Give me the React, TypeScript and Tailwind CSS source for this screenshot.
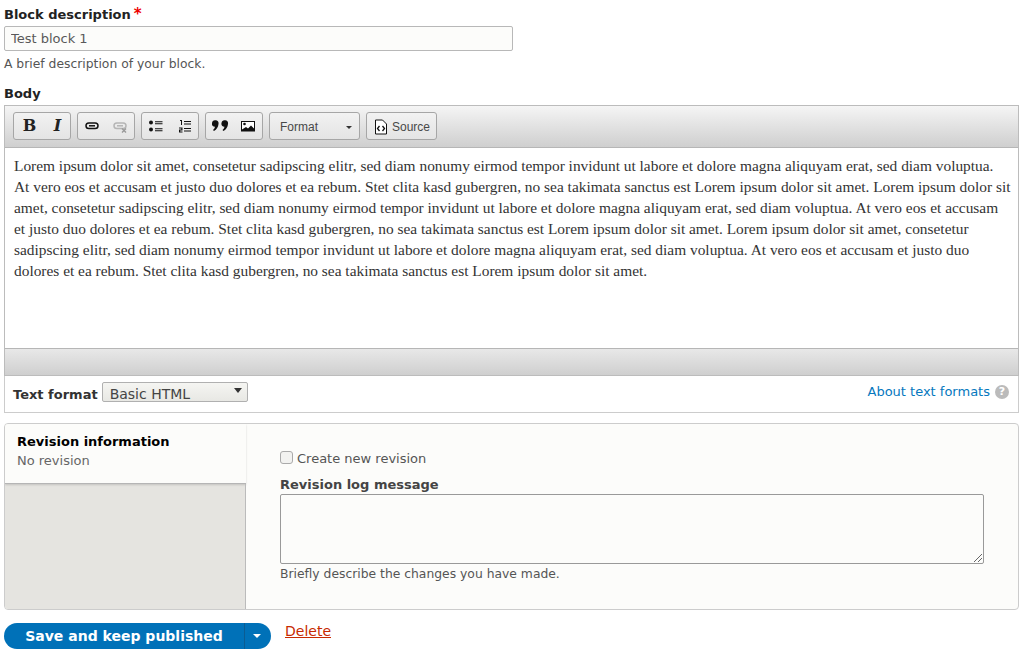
const ui = "font-['DejaVu_Sans',sans-serif]";

function Group({ children, w }: { children: React.ReactNode; w: string }) {
  return (
    <div className={`flex h-[28px] items-center justify-around rounded-[3px] border border-[#a6a6a6] bg-gradient-to-b from-[#f2f2f2] to-[#e4e4e4] ${w}`}>
      {children}
    </div>
  );
}

function LinkIcon({ off }: { off?: boolean }) {
  const c = off ? '#b5b5b5' : '#111';
  return (
    <svg width="16" height="16" viewBox="0 0 16 16" fill="none">
      <rect x="2" y="5" width="12" height="5.6" rx="2.8" stroke={c} strokeWidth="1.5" />
      <path d="M5 7.8h6" stroke={c} strokeWidth="1.5" />
      {off && <path d="M10 10.5l4 4m0-4l-4 4" stroke="#999" strokeWidth="1.4" />}
    </svg>
  );
}

const lines = [
  'Lorem ipsum dolor sit amet, consetetur sadipscing elitr, sed diam nonumy eirmod tempor invidunt ut labore et dolore magna aliquyam erat, sed diam voluptua.',
  'At vero eos et accusam et justo duo dolores et ea rebum. Stet clita kasd gubergren, no sea takimata sanctus est Lorem ipsum dolor sit amet. Lorem ipsum dolor sit',
  'amet, consetetur sadipscing elitr, sed diam nonumy eirmod tempor invidunt ut labore et dolore magna aliquyam erat, sed diam voluptua. At vero eos et accusam',
  'et justo duo dolores et ea rebum. Stet clita kasd gubergren, no sea takimata sanctus est Lorem ipsum dolor sit amet. Lorem ipsum dolor sit amet, consetetur',
  'sadipscing elitr, sed diam nonumy eirmod tempor invidunt ut labore et dolore magna aliquyam erat, sed diam voluptua. At vero eos et accusam et justo duo',
  'dolores et ea rebum. Stet clita kasd gubergren, no sea takimata sanctus est Lorem ipsum dolor sit amet.',
];

export default function App() {
  return (
    <div className={`${ui} h-[654px] w-[1026px] overflow-hidden bg-white px-1 text-[13px] text-[#333]`}>
      <div className="flex h-[26px] items-end pb-[2px]">
        <label className="font-bold text-[#222]">Block description</label>
        <span className="relative top-[-2px] ml-[3px] text-[15px] leading-none font-bold text-[#e00]">*</span>
      </div>
      <input
        readOnly
        value="Test block 1"
        className="block h-[25px] w-[509px] rounded-[2px] border border-[#b8b8b8] bg-[#fcfcfa] px-[6px] text-[13px] text-[#595959] outline-none"
      />
      <p className="mt-[4px] text-[12.35px] leading-[18px] text-[#555]">A brief description of your block.</p>
      <label className="mt-[11px] block leading-[20px] font-bold text-[#222]">Body</label>

      <div className="mt-[1px] w-[1015px] border border-[#bcbcbc]">
        <div className="flex h-[42px] gap-[6px] border-b border-[#b6b6b6] bg-gradient-to-b from-[#f5f5f5] to-[#cfcfcf] pt-[6px] pl-[8px]">
          <Group w="w-[58px]">
            <span className="font-['DejaVu_Serif',serif] text-[16px] font-bold text-[#222]">B</span>
            <span className="font-['DejaVu_Serif',serif] text-[16px] font-bold text-[#222] italic">I</span>
          </Group>
          <Group w="w-[58px]">
            <LinkIcon />
            <LinkIcon off />
          </Group>
          <Group w="w-[58px]">
            <svg width="16" height="16" viewBox="0 0 16 16" fill="#111">
              <circle cx="3" cy="4.5" r="2" />
              <circle cx="3" cy="11.5" r="2" />
              <path d="M7 3.2h7.5v1H7zM7 5.2h7.5v1H7zM7 10.2h7.5v1H7zM7 12.2h7.5v1H7z" />
            </svg>
            <svg width="16" height="16" viewBox="0 0 16 16" fill="#111">
              <path d="M8 3h7v1H8zM8 5.5h7v1H8zM8 10h7v1H8zM8 12.5h7v1H8z" />
              <path d="M4 2h2v5H5V3H4zM3 9.5h3.5v3H4.2v1h2.3v1H3v-3h2.3v-1H3z" />
            </svg>
          </Group>
          <Group w="w-[58px]">
            <svg width="17" height="16" viewBox="0 0 17 16" fill="#111">
              <path d="M0 5a3 3 0 1 1 6.5 1c-.3 3-1.8 5.5-4.5 7l-1-1c1.200-1 1.800-2 2-3.200A3 3 0 0 1 0 5zM9.500 5a3 3 0 1 1 6.500 1c-.3 3-1.800 5.500-4.500 7l-1-1c1.200-1 1.800-2 2-3.200A3 3 0 0 1 9.500 5z" />
            </svg>
            <svg width="16" height="16" viewBox="0 0 16 16">
              <path d="M1 3h14v10.500H1z" fill="#111" />
              <path d="M2 4h12v6.500l-3-3-3 3-2-1.500-4 2.500z" fill="#fff" />
              <circle cx="4.500" cy="6" r="1.300" fill="#111" />
            </svg>
          </Group>
          <div className="flex h-[28px] w-[91px] items-center justify-between rounded-[3px] border border-[#a6a6a6] bg-gradient-to-b from-[#f2f2f2] to-[#e4e4e4] pt-[1px] pr-[7px] pl-[10px] font-['Liberation_Sans',sans-serif] text-[12px] text-[#484848]">
            Format
            <span className="mt-[1px] border-x-[3px] border-t-[3px] border-x-transparent border-t-[#333]" />
          </div>
          <div className="flex h-[28px] w-[71px] items-center gap-[5px] rounded-[3px] border border-[#a6a6a6] bg-gradient-to-b from-[#f2f2f2] to-[#e4e4e4] pt-[1px] pl-[8px] font-['Liberation_Sans',sans-serif] text-[12px] text-[#484848]">
            <svg width="12" height="16" viewBox="0 0 12 16" fill="none">
              <path d="M.5 1h7l4 4v10H.5z" fill="#fff" stroke="#111" />
              <path d="M4.500 7L2.500 9.500 4.500 12M7.500 7l2 2.500-2 2.500" stroke="#111" strokeWidth="1.300" />
            </svg>
            Source
          </div>
        </div>
        <div className="h-[200px] overflow-hidden bg-white px-[9px] pt-[7px] font-['Liberation_Serif',serif] text-[15.4px] leading-[21px] whitespace-nowrap text-[#333]">
          {lines.map((line) => (
            <div key={line}>{line}</div>
          ))}
        </div>
        <div className="h-[27px] border-t border-[#b6b6b6] bg-gradient-to-b from-[#e8e8e8] to-[#cfcfcf]" />
      </div>

      <div className="flex h-[37px] w-[1015px] items-center justify-between border-x border-b border-[#ccc] pr-[9px] pl-[8px]">
        <div className="flex items-center">
          <span className="mt-[2px] font-bold text-[#333]">Text format</span>
          <div className="mb-[4px] ml-[4px] flex h-[20px] w-[146px] items-center justify-between rounded-[2px] border border-[#b0b0b0] bg-gradient-to-b from-[#f5f5f2] to-[#e8e8e4] pt-[4px] pr-[5px] pl-[7px] text-[14px] text-[#444]">
            Basic HTML
            <span className="mb-[7px] border-x-[4px] border-t-[5px] border-x-transparent border-t-[#333]" />
          </div>
        </div>
        <div className="mb-[4px] flex items-center gap-[5px]">
          <span className="text-[#0678be]">About text formats</span>
          <span className="flex h-[14px] w-[14px] items-center justify-center rounded-full bg-[#bbb] text-[11px] font-bold text-white">?</span>
        </div>
      </div>

      <div className="mt-[10px] flex h-[187px] w-[1015px] overflow-hidden rounded-[4px] border border-[#ccc] bg-[#fcfcfa]">
        <div className="flex w-[241px] flex-col bg-[#e5e4e0]">
          <div className="h-[60px] border-b border-[#b5b5b5] bg-[#fcfcfa] pt-[9px] pl-[12px] shadow-[0_1px_2px_rgba(0,0,0,0.15)]">
            <div className="leading-[17px] font-bold text-[#000]">Revision information</div>
            <div className="mt-[2px] leading-[17px] text-[#666]">No revision</div>
          </div>
          <div className="flex-1 border-r border-[#bbb]" />
        </div>
        <div className="pt-[25px] pl-[34px]">
          <div className="flex items-center">
            <span className="mt-[-2px] h-[13px] w-[13px] rounded-[3px] border border-[#aaa] bg-[#f2f2f0]" />
            <span className="ml-[4px] text-[#555]">Create new revision</span>
          </div>
          <div className="mt-[7px] leading-[17px] font-bold text-[#444]">Revision log message</div>
          <div className="relative mt-[1px] h-[70px] w-[704px] rounded-[2px] border border-[#999] bg-[#fcfcfa]">
            <svg className="absolute right-0 bottom-0" width="10" height="10" viewBox="0 0 10 10" stroke="#666">
              <path d="M1 9l8-8M5 9l4-4" />
            </svg>
          </div>
          <p className="mt-[1px] text-[12.35px] leading-[18px] text-[#555]">Briefly describe the changes you have made.</p>
        </div>
      </div>

      <div className="mt-[13px] flex items-start">
        <div className="flex h-[26px] w-[267px] items-center rounded-full bg-[#0071b8] font-bold text-white">
          <span className="w-[240px] text-center text-[14px]">Save and keep published</span>
          <span className="h-full w-px bg-[#0b5c92]" />
          <span className="ml-[8px] border-x-[4px] border-t-[4px] border-x-transparent border-t-white" />
        </div>
        <a className="ml-[14px] text-[14px] leading-[17px] text-[#c72a00] underline">Delete</a>
      </div>
    </div>
  );
}
